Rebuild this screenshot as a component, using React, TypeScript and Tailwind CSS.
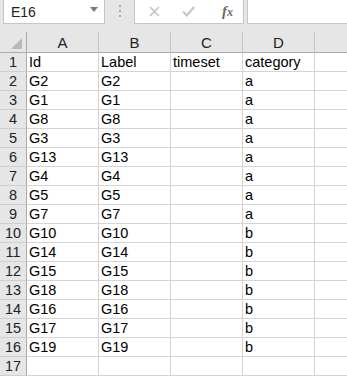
import React from "react";

const rows: string[][] = [
  ["Id", "Label", "timeset", "category"],
  ["G2", "G2", "", "a"],
  ["G1", "G1", "", "a"],
  ["G8", "G8", "", "a"],
  ["G3", "G3", "", "a"],
  ["G13", "G13", "", "a"],
  ["G4", "G4", "", "a"],
  ["G5", "G5", "", "a"],
  ["G7", "G7", "", "a"],
  ["G10", "G10", "", "b"],
  ["G14", "G14", "", "b"],
  ["G15", "G15", "", "b"],
  ["G18", "G18", "", "b"],
  ["G16", "G16", "", "b"],
  ["G17", "G17", "", "b"],
  ["G19", "G19", "", "b"],
  ["", "", "", ""],
];

const font = { fontFamily: '"Liberation Sans", Arial, sans-serif' };

export default function App() {
  return (
    <div className="w-[347px] h-[376px] overflow-hidden bg-white text-black" style={font}>
      {/* formula bar */}
      <div className="h-[32px] bg-[#e6e6e6] flex items-start">
        <div className="ml-[3px] w-[102px] h-[24px] bg-white border border-t-0 border-[#c6c6c6] flex items-center pl-[7px] pr-[6px]">
          <span className="text-[14px] text-[#222] leading-none">E16</span>
          <span className="ml-auto w-0 h-0 border-l-[4px] border-r-[4px] border-t-[5px] border-l-transparent border-r-transparent border-t-[#7a7a7a] -mt-[4px]" />
        </div>
        <div className="ml-[14px] mt-[5px] flex flex-col gap-[3px]">
          <span className="w-[2px] h-[2px] bg-[#a8a8a8]" />
          <span className="w-[2px] h-[2px] bg-[#a8a8a8]" />
          <span className="w-[2px] h-[2px] bg-[#a8a8a8]" />
        </div>
        <div className="ml-[13px] w-[110px] h-[24px] bg-white border border-t-0 border-[#c6c6c6] flex items-center">
          <svg className="ml-[14px]" width="11" height="11" viewBox="0 0 11 11">
            <path d="M1 1 L10 10 M10 1 L1 10" stroke="#c4c4c4" strokeWidth="1.6" fill="none" />
          </svg>
          <svg className="ml-[22px]" width="13" height="11" viewBox="0 0 13 11">
            <path d="M1 5.5 L4.8 9.5 L12 1" stroke="#c4c4c4" strokeWidth="2" fill="none" />
          </svg>
          <span
            className="ml-[27px] text-[15px] italic font-bold text-[#6a6a6a] leading-none"
            style={{ fontFamily: '"Liberation Serif", "Times New Roman", serif' }}
          >
            f<span className="text-[12px]">x</span>
          </span>
        </div>
        <div className="ml-[3px] flex-1 h-[24px] bg-white border border-t-0 border-r-0 border-[#c6c6c6]" />
      </div>

      {/* grid */}
      <div className="grid grid-cols-[27px_72px_72px_72px_72px_1fr]">
        {/* header row */}
        <div className="h-[21px] bg-[#e6e6e6] border-r border-b border-[#ababab] relative">
          <svg className="absolute right-[4px] bottom-[3px]" width="11" height="11" viewBox="0 0 11 11">
            <polygon points="11,0 11,11 0,11" fill="#b9b9b9" />
          </svg>
        </div>
        {["A", "B", "C", "D", ""].map((c, i) => (
          <div
            key={i}
            className={`h-[21px] bg-[#e6e6e6] border-b border-[#ababab] flex items-center justify-center text-[15px] text-[#222] leading-none ${
              i < 4 ? "border-r border-r-[#c6c6c6]" : ""
            }`}
          >
            {c}
          </div>
        ))}

        {rows.map((r, ri) => (
          <React.Fragment key={ri}>
            <div className="h-[19px] bg-[#e6e6e6] border-r border-b border-r-[#ababab] border-b-[#cfcfcf] flex items-center justify-center text-[14.5px] text-[#222] leading-none pt-[1px]">
              {ri + 1}
            </div>
            {r.map((v, ci) => (
              <div
                key={ci}
                className="h-[19px] border-r border-b border-[#d4d4d4] flex items-center pl-[2px] text-[14.5px] leading-none whitespace-nowrap overflow-hidden pt-[1px]"
              >
                {v}
              </div>
            ))}
            <div className="h-[19px] border-b border-[#d4d4d4]" />
          </React.Fragment>
        ))}
      </div>
    </div>
  );
}
